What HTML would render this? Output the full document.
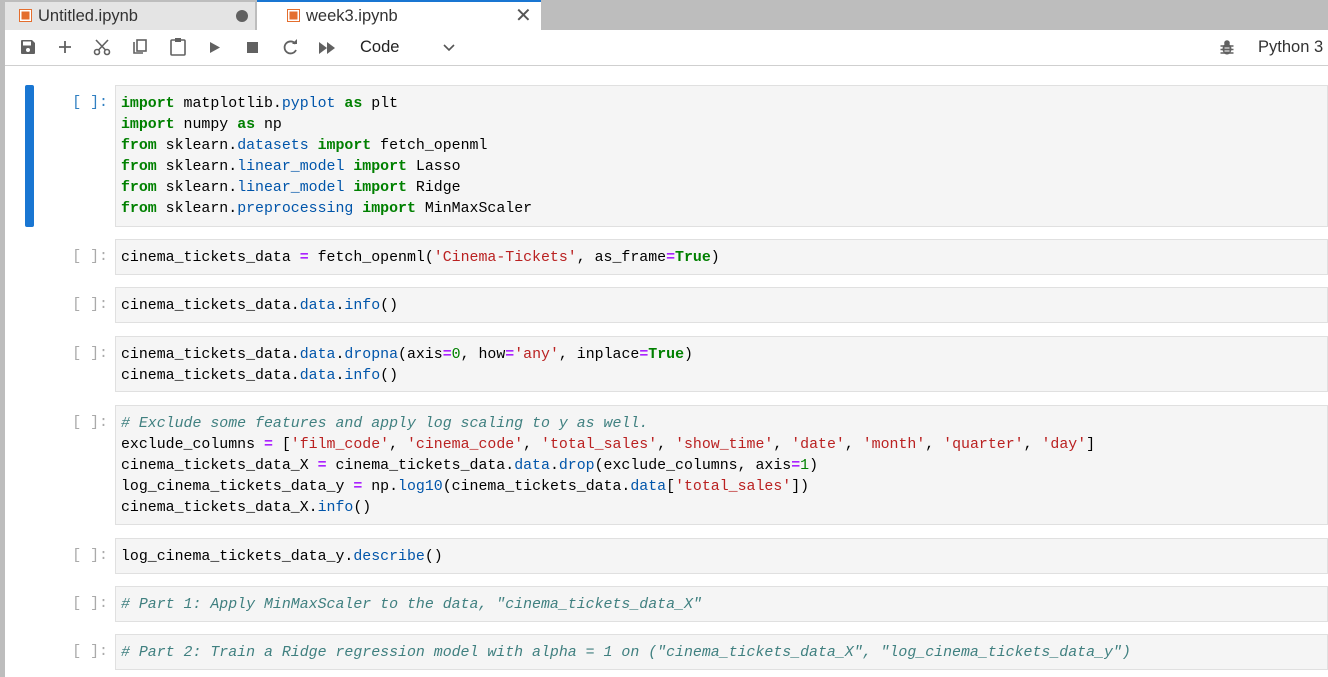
<!DOCTYPE html>
<html><head><style>
body{margin:0;width:1328px;height:677px;overflow:hidden;background:#fff;font-family:"Liberation Sans",sans-serif;position:relative}
.top{position:absolute;left:0;top:0;width:1328px;height:30px;background:#bdbdbd}
.lstrip{position:absolute;left:0;top:0;width:5px;height:677px;background:#bdbdbd}
.tab{position:absolute;top:2px;height:28px;font-size:16.5px;color:#333;line-height:28px}
.t1{left:5px;width:250px;background:#e4e4e4}
.t2{left:257px;width:284px;background:#fff;border-top:2px solid #1976d2;top:0;height:30px}
.ic{display:inline-block;width:11px;height:11px;border:1.5px solid #e46e2e;background:#e46e2e;box-shadow:inset 0 0 0 1.5px #fff;vertical-align:-1px;margin:0 6px 0 14px}
.tb{position:absolute;top:30px;left:5px;width:1323px;height:35px;background:#fff;border-bottom:1px solid #cfcfcf}
.tb svg{position:absolute}
.code,.pr{font-family:"Liberation Mono",monospace;font-size:14.9px;line-height:21px}
.cell{position:absolute;left:115px;width:1213px;background:#f5f5f5;border:1px solid #e0e0e0;box-sizing:border-box;padding:8px 5px 6px;white-space:pre;color:#000}
.pr{position:absolute;left:60px;width:48px;text-align:right;color:#aaa}
.k{color:#008000;font-weight:bold}.p{color:#0055aa}.s{color:#ba2121}.o{color:#aa22ff;font-weight:bold}.n{color:#008000}.c{color:#408080;font-style:italic}
</style></head><body>
<div class="top"></div><div class="lstrip"></div>
<div class="tab t1"><span class="ic"></span>Untitled.ipynb<span style="position:absolute;left:231px;top:8px;width:12px;height:12px;border-radius:50%;background:#616161"></span></div>
<div class="tab t2"><span class="ic" style="margin-left:30px"></span>week3.ipynb<span style="position:absolute;left:258px;top:0;font-size:20px;color:#555">✕</span></div>
<div class="tb">
<svg style="left:15px;top:9px" width="16" height="16" viewBox="0 0 16 16"><path d="M1 2a1 1 0 0 1 1-1h10l3 3v10a1 1 0 0 1-1 1H2a1 1 0 0 1-1-1z" fill="#616161"/><rect x="3" y="2.5" width="8" height="4" fill="#fff"/><circle cx="8" cy="11" r="2" fill="#fff"/></svg>
<svg style="left:52px;top:9px" width="16" height="16"><path d="M8 2v12M2 8h12" stroke="#616161" stroke-width="1.8"/></svg>
<svg style="left:88px;top:8px" width="18" height="18"><circle cx="4" cy="14" r="2.5" fill="none" stroke="#616161" stroke-width="1.6"/><circle cx="14" cy="14" r="2.5" fill="none" stroke="#616161" stroke-width="1.6"/><path d="M5.5 12L15 2M12.5 12L3 2" stroke="#616161" stroke-width="1.6"/></svg>
<svg style="left:126px;top:8px" width="18" height="18"><path d="M3 4v11h9" fill="none" stroke="#616161" stroke-width="1.6"/><rect x="6" y="2" width="9" height="11" fill="none" stroke="#616161" stroke-width="1.6"/></svg>
<svg style="left:164px;top:7px" width="18" height="19"><rect x="2" y="3" width="14" height="15" rx="1" fill="none" stroke="#616161" stroke-width="1.6"/><rect x="6" y="1" width="6" height="4" fill="#616161"/></svg>
<svg style="left:204px;top:11px" width="12" height="13"><path d="M1 1l10 5.5L1 12z" fill="#616161"/></svg>
<svg style="left:242px;top:12px" width="12" height="12"><rect width="11" height="11" fill="#616161"/></svg>
<svg style="left:277px;top:9px" width="17" height="17"><path d="M13.5 5A6 6 0 1 0 14 11" fill="none" stroke="#616161" stroke-width="1.8"/><path d="M10 5h5V0z" fill="#616161"/></svg>
<svg style="left:314px;top:12px" width="16" height="12"><path d="M0 0l8 6-8 6zM8 0l8 6-8 6z" fill="#616161"/></svg>
<span style="position:absolute;left:355px;top:8px;font-size:16.5px;color:#222">Code</span>
<svg style="left:438px;top:14px" width="12" height="8"><path d="M1 1l5 5 5-5" fill="none" stroke="#555" stroke-width="1.6"/></svg>
<svg style="left:1214px;top:9px" width="16" height="17"><ellipse cx="8" cy="10" rx="4.5" ry="5.5" fill="#616161"/><circle cx="8" cy="4" r="2.8" fill="#616161"/><path d="M1.5 7h13M1.5 10.5h13M1.5 14h13" stroke="#616161" stroke-width="1.6"/><path d="M5.5 9h5M5.5 12h5" stroke="#fff" stroke-width="1"/></svg>
<span style="position:absolute;left:1253px;top:8px;font-size:16.5px;color:#333">Python 3</span>
</div>

<div style="position:absolute;left:25px;top:85px;width:9px;height:142px;background:#1976d2;border-radius:2px"></div>

<div class="pr" style="top:93px;color:#307fc1">[ ]:</div>
<div class="cell code" style="top:85px;height:142px"><span class="k">import</span> matplotlib.<span class="p">pyplot</span> <span class="k">as</span> plt
<span class="k">import</span> numpy <span class="k">as</span> np
<span class="k">from</span> sklearn.<span class="p">datasets</span> <span class="k">import</span> fetch_openml
<span class="k">from</span> sklearn.<span class="p">linear_model</span> <span class="k">import</span> Lasso
<span class="k">from</span> sklearn.<span class="p">linear_model</span> <span class="k">import</span> Ridge
<span class="k">from</span> sklearn.<span class="p">preprocessing</span> <span class="k">import</span> MinMaxScaler</div>

<div class="pr" style="top:247px">[ ]:</div>
<div class="cell code" style="top:239px;height:36px">cinema_tickets_data <span class="o">=</span> fetch_openml(<span class="s">'Cinema-Tickets'</span>, as_frame<span class="o">=</span><span class="k">True</span>)</div>

<div class="pr" style="top:295px">[ ]:</div>
<div class="cell code" style="top:287px;height:36px">cinema_tickets_data.<span class="p">data</span>.<span class="p">info</span>()</div>

<div class="pr" style="top:344px">[ ]:</div>
<div class="cell code" style="top:336px;height:56px">cinema_tickets_data.<span class="p">data</span>.<span class="p">dropna</span>(axis<span class="o">=</span><span class="n">0</span>, how<span class="o">=</span><span class="s">'any'</span>, inplace<span class="o">=</span><span class="k">True</span>)
cinema_tickets_data.<span class="p">data</span>.<span class="p">info</span>()</div>

<div class="pr" style="top:413px">[ ]:</div>
<div class="cell code" style="top:405px;height:120px"><span class="c"># Exclude some features and apply log scaling to y as well.</span>
exclude_columns <span class="o">=</span> [<span class="s">'film_code'</span>, <span class="s">'cinema_code'</span>, <span class="s">'total_sales'</span>, <span class="s">'show_time'</span>, <span class="s">'date'</span>, <span class="s">'month'</span>, <span class="s">'quarter'</span>, <span class="s">'day'</span>]
cinema_tickets_data_X <span class="o">=</span> cinema_tickets_data.<span class="p">data</span>.<span class="p">drop</span>(exclude_columns, axis<span class="o">=</span><span class="n">1</span>)
log_cinema_tickets_data_y <span class="o">=</span> np.<span class="p">log10</span>(cinema_tickets_data.<span class="p">data</span>[<span class="s">'total_sales'</span>])
cinema_tickets_data_X.<span class="p">info</span>()</div>

<div class="pr" style="top:546px">[ ]:</div>
<div class="cell code" style="top:538px;height:36px">log_cinema_tickets_data_y.<span class="p">describe</span>()</div>

<div class="pr" style="top:594px">[ ]:</div>
<div class="cell code" style="top:586px;height:36px"><span class="c"># Part 1: Apply MinMaxScaler to the data, "cinema_tickets_data_X"</span></div>

<div class="pr" style="top:642px">[ ]:</div>
<div class="cell code" style="top:634px;height:36px"><span class="c"># Part 2: Train a Ridge regression model with alpha = 1 on ("cinema_tickets_data_X", "log_cinema_tickets_data_y")</span></div>
</body></html>
